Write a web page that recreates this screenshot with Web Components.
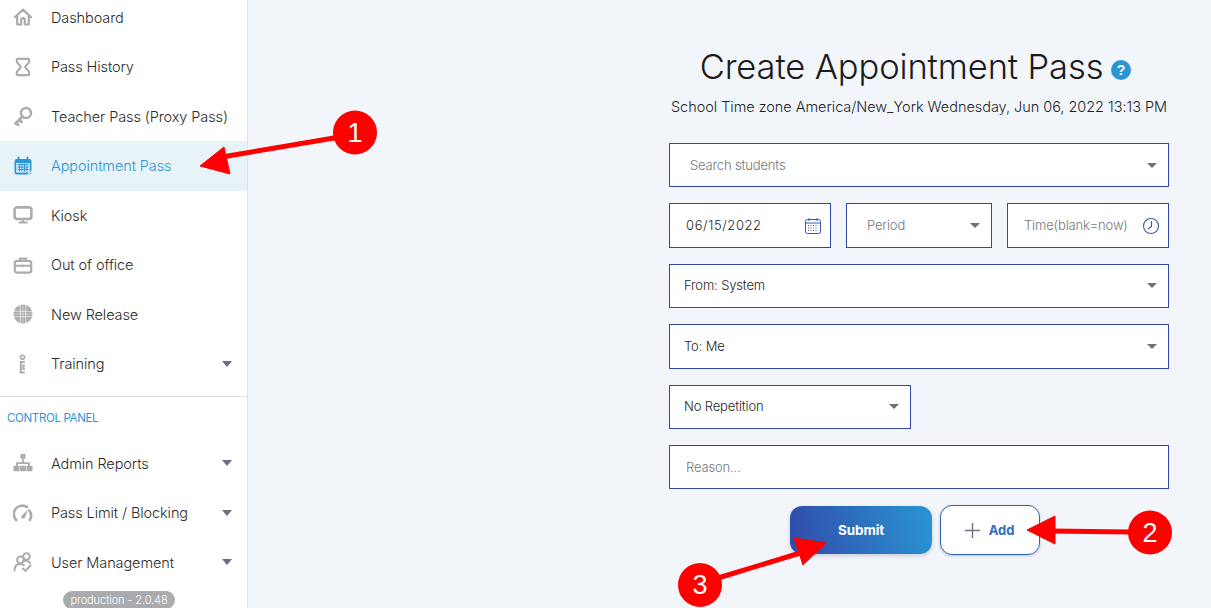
<!DOCTYPE html>
<html lang="en"><head><meta charset="utf-8"><title>Create Appointment Pass</title>
<style>
html,body{margin:0;padding:0;height:100%;overflow:hidden}
body{font-family:Inter,"Noto Sans",sans-serif;background:#f2f5f9;color:#222}
</style></head><body>
<x-app>
  <x-sidebar slot="side">
    <x-nav icon="home" label="Dashboard"></x-nav>
    <x-nav icon="hourglass" label="Pass History"></x-nav>
    <x-nav icon="key" label="Teacher Pass (Proxy Pass)"></x-nav>
    <x-nav icon="calendar" label="Appointment Pass" active></x-nav>
    <x-nav icon="monitor" label="Kiosk"></x-nav>
    <x-nav icon="briefcase" label="Out of office"></x-nav>
    <x-nav icon="globe" label="New Release"></x-nav>
    <x-nav icon="info" label="Training" caret></x-nav>
    <x-section>CONTROL PANEL</x-section>
    <x-nav icon="org" label="Admin Reports" caret></x-nav>
    <x-nav icon="gauge" label="Pass Limit / Blocking" caret></x-nav>
    <x-nav icon="users" label="User Management" caret></x-nav>
    <x-version>production - 2.0.48</x-version>
  </x-sidebar>
  <x-form slot="main"></x-form>
  <x-annotations slot="over"></x-annotations>
</x-app>
<script>
const ICONS={
home:'<path d="M1.800 10.200 10 2.600l8.200 7.600M4.200 8.400V17.500h4v-4.500a1.800 1.800 0 0 1 3.600 0V17.500h4V8.400" fill="none" stroke="currentColor" stroke-width="2.200" stroke-linejoin="round" stroke-linecap="round"/>',
hourglass:'<path d="M4.800 1.800h10.400a1 1 0 0 1 1 1v1.500c0 2.600-4 4-4 5.700s4 3.100 4 5.700v1.500a1 1 0 0 1-1 1H4.800a1 1 0 0 1-1-1v-1.500c0-2.600 4-4 4-5.700s-4-3.100-4-5.700V2.800a1 1 0 0 1 1-1z" fill="none" stroke="currentColor" stroke-width="2.200" stroke-linejoin="round"/>',
key:'<circle cx="13" cy="7" r="5" fill="none" stroke="currentColor" stroke-width="2.400"/><path d="M9.500 10.500 2.500 17.500M3 17l2.300 2M6.200 13.800l2.200 2.200" fill="none" stroke="currentColor" stroke-width="2.800" stroke-linecap="round"/>',
calendar:'<rect x="1.500" y="3" width="17" height="15.500" rx="2.500" fill="currentColor"/><path d="M5.500 1.500v3M14.500 1.500v3" stroke="currentColor" stroke-width="1.800" stroke-linecap="round"/><rect x="3.300" y="7" width="13.400" height="9.500" fill="#e8f3f8"/><path d="M4.500 8.500h11M4.500 11h11M4.500 13.500h11M6.500 7.500v8M9 7.500v8M11.500 7.500v8M14 7.500v8" stroke="currentColor" stroke-width="1.100"/><path d="M15 18.600 19 15" stroke="#e8f3f8" stroke-width="1.300"/>',
monitor:'<rect x="1.600" y="2.400" width="16.800" height="11.600" rx="2.400" fill="none" stroke="currentColor" stroke-width="2.600"/><path d="M10 14v3M5.500 17.500h9" stroke="currentColor" stroke-width="2"/>',
briefcase:'<rect x="1.800" y="5.800" width="16.400" height="11.800" rx="2.400" fill="none" stroke="currentColor" stroke-width="2.200"/><path d="M7 5.500V3.400h6v2.100M2 10.800h16" fill="none" stroke="currentColor" stroke-width="2"/><rect x="8.700" y="9.800" width="2.600" height="2.200" fill="currentColor"/>',
globe:'<circle cx="10" cy="10" r="9.500" fill="currentColor"/><path d="M1 7.300h18M1 12.700h18M7.300 1v18M12.700 1v18" stroke="#fff" stroke-width=".8" opacity=".8"/><path d="M10 1v18M1 10h18" stroke="#fff" stroke-width=".6" opacity=".7"/>',
info:'<circle cx="9.500" cy="3.200" r="2" fill="none" stroke="currentColor" stroke-width="1.600"/><path d="M11.800 8H7.800v10.500h4M11.800 11.500h-1.400v3.500h1.400" fill="none" stroke="currentColor" stroke-width="2"/>',
org:'<rect x="7.500" y="1" width="5" height="4.800" fill="currentColor"/><path d="M10 6v4M4 13v-2.800h12V13" fill="none" stroke="currentColor" stroke-width="1.800"/><rect x=".5" y="12.800" width="6" height="5.400" rx=".8" fill="currentColor"/><rect x="7" y="12.800" width="6" height="5.400" rx=".8" fill="currentColor"/><rect x="13.500" y="12.800" width="6" height="5.400" rx=".8" fill="currentColor"/>',
gauge:'<path d="M3.200 17a8.500 8.500 0 0 1 10.800-13M16.300 7.500a8.500 8.500 0 0 1 .5 9.500" fill="none" stroke="currentColor" stroke-width="2.600" stroke-linecap="round"/><path d="M8 13.500 14.800 6.500 12 14.800a2.300 2.300 0 0 1-4-1.300z" fill="currentColor"/>',
users:'<circle cx="13.500" cy="4.500" r="3.300" fill="none" stroke="currentColor" stroke-width="2"/><circle cx="7.500" cy="7.800" r="3.400" fill="none" stroke="currentColor" stroke-width="2"/><path d="M1.500 18.500c0-4 2-6.500 5.500-6.500 1.700 0 3 .5 3.800 1.300M10.500 9c2-.9 5-.5 6.500 2M10 16.500l2.500 2.500 5-5.500" fill="none" stroke="currentColor" stroke-width="2" stroke-linecap="round"/>'
};
function el(name,style,html){
  customElements.define(name,class extends HTMLElement{
    connectedCallback(){
      if(this.shadowRoot)return;
      const r=this.attachShadow({mode:'open'});
      r.innerHTML='<style>'+style+'</style>'+(typeof html==='function'?html(this):html);
    }
  });
}
el('x-app',`:host{display:flex;width:1211px;height:608px;position:relative;overflow:hidden}
 .side{display:block;flex:none}.main{display:block;flex:1}`,
 `<div class="side"><slot name="side"></slot></div><div class="main"><slot name="main"></slot></div><slot name="over"></slot>`);
el('x-sidebar',`:host{display:block;width:247px;height:608px;background:#fff;border-right:1px solid #dfe2e6;overflow:hidden;box-sizing:content-box}
 .in{margin-top:-7.300px}`,`<div class="in"><slot></slot></div>`);
el('x-nav',`:host{display:flex;align-items:center;height:49.500px;color:#2b2b2b;font-size:14.500px;font-weight:300;letter-spacing:-.1px}
 :host([active]){background:#e8f3f8;color:#2b96d3}
 svg{width:20px;height:20px;margin-left:13px;margin-right:18px;flex:none;color:#aaacb0}
 :host([active]) svg{color:#2b96d3}
 .l{flex:1;white-space:nowrap}
 .c{width:0;height:0;border:5.500px solid transparent;border-top:6px solid #6b7080;border-bottom:0;margin-right:15px}`,
 t=>`<svg viewBox="0 0 20 20">${ICONS[t.getAttribute('icon')]}</svg><span class="l">${t.getAttribute('label')}</span>${t.hasAttribute('caret')?'<span class="c"></span>':''}`);
el('x-section',`:host{display:block;border-top:1px solid #dfe2e6;margin-top:7px;height:42px;line-height:42px;padding-left:7px;font-size:11.500px;color:#2b96d3;letter-spacing:-.35px}`,`<slot></slot>`);
el('x-version',`:host{display:flex;justify-content:center;margin-top:4px;padding-right:9px}
 span{display:inline-block;background:#a9abaf;color:#fff;font-size:11px;font-weight:300;line-height:18px;padding:0 7px;border-radius:9px;letter-spacing:-.1px}`,`<span><slot></slot></span>`);
el('x-field',`:host{display:flex;align-items:center;box-sizing:border-box;height:44.350px;background:#fff;border:1px solid #2f46ab;font-size:13px;font-weight:300;letter-spacing:-.15px;color:#1f1f1f;padding-left:var(--pl,14px);padding-right:var(--pr,11px)}
 :host([ph]){color:#74777c}
 .t{flex:1;white-space:nowrap;margin-top:-1px}
 .c{width:0;height:0;border:5px solid transparent;border-top:5.500px solid #6b7080;border-bottom:0}`,
 t=>`<span class="t"><slot></slot></span>${t.hasAttribute('caret')?'<span class="c"></span>':''}<slot name="icon"></slot>`);
el('x-btn',`:host{display:flex;align-items:center;justify-content:center;box-sizing:border-box;border-radius:12px;font-weight:700;font-size:13.500px;letter-spacing:-.1px}
 :host([primary]){width:142px;height:48px;background:linear-gradient(75deg,#304aaa,#2a96d2);color:#fff;box-shadow:0 2px 4px rgba(40,60,120,.2)}
 :host([outline]){width:100px;height:50px;border:1.500px solid #2f63b4;background:#fff;color:#2f6dbe;gap:8px;padding-right:2px;font-size:13px;box-shadow:0 1px 3px rgba(40,60,120,.25)}
 svg{width:17px;height:17px}`,
 t=>`${t.hasAttribute('outline')?'<svg viewBox="0 0 18 18"><path d="M9 1v16M1 9h16" stroke="#6f7480" stroke-width="1.500"/></svg>':''}<slot></slot>`);
el('x-form',`:host{display:block;width:500px;margin-left:421px;padding-top:43px}
 h1{margin:0;font-weight:300;font-size:34.500px;letter-spacing:-.12px;line-height:48px;color:#1b1b1b;display:flex;justify-content:center;align-items:center;gap:8px;padding-right:7px;white-space:nowrap}
 h1 svg{width:20px;height:20px;margin-top:6px;flex:none}
 .sub{font-size:14.500px;font-weight:300;letter-spacing:-.04px;line-height:20px;margin:6px 0 0;text-align:center;color:#1f1f1f;white-space:nowrap;height:20px}
 .rows{display:grid;gap:16.020px;margin-top:26.100px}
 .three{display:grid;grid-template-columns:162px 146px 162px;justify-content:space-between}
 .btns{display:flex;justify-content:flex-end;gap:8px;align-items:center;padding-right:129px}
 .ic{width:18px;height:18px;display:block}`,
 `<h1>Create Appointment Pass <svg viewBox="0 0 20 20"><circle cx="10" cy="10" r="10" fill="#2b96d3"/><text x="10" y="14.800" text-anchor="middle" font-family="Liberation Sans" font-weight="700" font-size="14" fill="#fff">?</text></svg></h1>
 <p class="sub">School Time zone America/New_York Wednesday, Jun 06, 2022 13:13 PM</p>
 <div class="rows">
  <x-field ph caret style="--pl:20px">Search students</x-field>
  <div class="three">
   <x-field style="--pl:16px;--pr:8px;letter-spacing:.6px">06/15/2022<svg slot="icon" class="ic" viewBox="0 0 18 18"><rect x="1.500" y="2.500" width="15" height="14" rx="2" fill="none" stroke="#3a55b5" stroke-width="1"/><path d="M5 1v3M13 1v3" stroke="#3a55b5"/><path d="M1.500 6h15" stroke="#3a55b5"/><path d="M4 8.500h10M4 11h10M4 13.500h10" stroke="#3a55b5" stroke-dasharray="1 1.500"/></svg></x-field>
   <x-field ph caret style="--pl:20px">Period</x-field>
   <x-field ph style="--pl:16px;--pr:8px">Time(blank=now)<svg slot="icon" class="ic" viewBox="0 0 18 18"><circle cx="9" cy="9" r="7.500" fill="none" stroke="#3a55b5" stroke-width="1.100"/><path d="M9.500 4v5.500L6 12" fill="none" stroke="#3a55b5" stroke-width="1.100"/></svg></x-field>
  </div>
  <x-field caret>From: System</x-field>
  <x-field caret>To: Me</x-field>
  <x-field caret style="width:242px">No Repetition</x-field>
  <x-field ph style="--pl:16px">Reason...</x-field>
  <div class="btns"><x-btn primary>Submit</x-btn><x-btn outline>Add</x-btn></div>
 </div>`);
el('x-annotations',`:host{position:absolute;inset:0;display:block;pointer-events:none}
 svg{position:absolute;left:0;top:0;width:1211px;height:608px}
 text{font-family:"Liberation Sans",sans-serif;font-size:27px;fill:#fff;text-anchor:middle}`,
 `<svg viewBox="0 0 1211 608">
 <g fill="#f00" stroke="#f00">
  <path d="M340 137 222 157" stroke-width="5"/><path d="M200 166 224 147 230 174z" stroke-width="1"/>
  <path d="M1130 532 1050 531" stroke-width="5"/><path d="M1027 530 1055 516 1055 544z" stroke-width="1"/>
  <path d="M718 578 810 550" stroke-width="5"/><path d="M826 543 794 538 803 565z" stroke-width="1"/>
 </g>
 <circle cx="355" cy="132.500" r="22" fill="#f00"/><text x="355" y="141.500">1</text>
 <circle cx="1150" cy="532.500" r="22" fill="#f00"/><text x="1150" y="541.500">2</text>
 <circle cx="700" cy="585" r="22" fill="#f00"/><text x="700" y="594">3</text>
 </svg>`);
</script>
</body></html>
